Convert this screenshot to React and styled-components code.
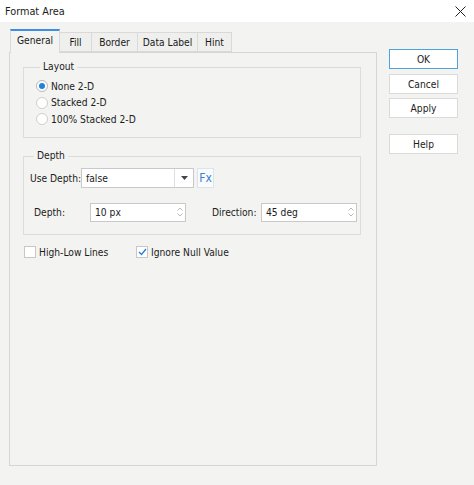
import styled, { createGlobalStyle } from "styled-components"

const GlobalStyle = createGlobalStyle`
  html, body {
    margin: 0;
    padding: 0;
    background: #f3f4f1;
  }
  * {
    box-sizing: border-box;
  }
`

const Dialog = styled.div`
  width: 474px;
  height: 485px;
  background: #f3f4f1;
  font-family: "DejaVu Sans Condensed", "Liberation Sans", sans-serif;
  font-size: 10.2px;
  color: #1b1b1b;
  display: flex;
  flex-direction: column;
  overflow: hidden;
  white-space: nowrap;
`

const TitleBar = styled.div`
  height: 22px;
  background: #ffffff;
  display: flex;
  align-items: center;
  justify-content: space-between;
  padding: 0 8px 0 5px;
  font-size: 10.8px;
`

const Body = styled.div`
  display: flex;
  padding: 7px 0 0 9px;
  gap: 12px;
`

const LeftColumn = styled.div`
  width: 368px;
  display: flex;
  flex-direction: column;
`

const TabStrip = styled.div`
  display: flex;
  align-items: flex-end;
  height: 23px;
  margin-left: 1px;
  position: relative;
  z-index: 1;
`

const Tab = styled.div`
  height: ${p => (p.$active ? "24px" : "20px")};
  width: ${p => p.$w}px;
  display: flex;
  align-items: center;
  justify-content: center;
  padding-bottom: ${p => (p.$active ? "3px" : "0")};
  background: ${p => (p.$active ? "#f3f4f1" : "#efefed")};
  border: 1px solid #d9d9d7;
  border-top: ${p => (p.$active ? "2px solid #3d8ee0" : "1px solid #d9d9d7")};
  border-bottom: ${p => (p.$active ? "none" : "1px solid #d9d9d7")};
  margin-right: -1px;
  margin-bottom: ${p => (p.$active ? "-1px" : "0")};
`

const Panel = styled.div`
  height: 414px;
  border: 1px solid #d6d6d4;
  padding: 7px 15px 0 13px;
  display: flex;
  flex-direction: column;
`

const Group = styled.fieldset`
  margin: 0 0 ${p => p.$mb}px;
  padding: ${p => p.$pad};
  border: 1px solid #dcdcda;
  min-width: 0;
  height: ${p => p.$h}px;
`

const Legend = styled.legend`
  padding: 0 3px;
  margin-left: 4px;
  line-height: 14px;
`

const RadioRow = styled.label`
  display: flex;
  align-items: center;
  height: 16.5px;
  gap: 3px;
`

const RadioDot = styled.span`
  width: 12px;
  height: 12px;
  border-radius: 50%;
  border: 1px solid ${p => (p.$on ? "#b8b8b8" : "#cfcfcf")};
  background: #ffffff;
  display: flex;
  align-items: center;
  justify-content: center;

  &::after {
    content: "";
    width: 6px;
    height: 6px;
    border-radius: 50%;
    background: ${p => (p.$on ? "#1f83dc" : "transparent")};
  }
`

const FieldRow = styled.div`
  display: flex;
  align-items: center;
  height: 20px;
  margin-top: ${p => p.$mt}px;
  padding-left: ${p => p.$pl || 0}px;
`

const FieldLabel = styled.span`
  width: ${p => p.$w}px;
  margin-left: ${p => p.$ml || 0}px;
  flex-shrink: 0;
`

const Combo = styled.div`
  width: 113px;
  height: 20px;
  background: #ffffff;
  border: 1px solid #c9c9c9;
  display: flex;
  align-items: center;
  padding-left: 4px;
`

const ComboText = styled.span`
  flex: 1;
`

const ComboArrow = styled.span`
  width: 19px;
  height: 100%;
  border-left: 1px solid #dedede;
  display: flex;
  align-items: center;
  justify-content: center;
`

const FxButton = styled.div`
  width: 17px;
  height: 20px;
  margin-left: 3px;
  border: 1px solid #dce3ec;
  background: #fafbfc;
  color: #3b7fd4;
  font-size: 12px;
  display: flex;
  align-items: center;
  justify-content: center;
`

const Spinner = styled.div`
  width: 96px;
  height: 19px;
  background: #ffffff;
  border: 1px solid #c9c9c9;
  display: flex;
  align-items: center;
  padding-left: 4px;
`

const SpinArrows = styled.span`
  width: 10px;
  display: flex;
  flex-direction: column;
  align-items: center;
  gap: 2px;
`

const CheckRow = styled.div`
  display: flex;
  align-items: center;
  margin-top: 11px;
  padding-left: 1px;
`

const CheckItem = styled.label`
  display: flex;
  align-items: center;
  gap: 3px;
  width: ${p => p.$w}px;
`

const CheckBox = styled.span`
  width: 12px;
  height: 12px;
  border: 1px solid #c7c7c7;
  background: #ffffff;
  display: flex;
  align-items: center;
  justify-content: center;
`

const ButtonColumn = styled.div`
  display: flex;
  flex-direction: column;
  padding-top: 20px;
  width: 69px;
`

const Button = styled.div`
  height: 20px;
  margin-top: ${p => p.$mt}px;
  background: #ffffff;
  border: 1px solid ${p => (p.$primary ? "#4fa3dc" : "#dadada")};
  display: flex;
  align-items: center;
  justify-content: center;
`

const UpDown = () => (
  <SpinArrows>
    <svg width="6" height="4" viewBox="0 0 6 4">
      <path d="M0.5 3.5 L3 1 L5.5 3.5" fill="none" stroke="#b9b9b9" strokeWidth="1" />
    </svg>
    <svg width="6" height="4" viewBox="0 0 6 4">
      <path d="M0.5 0.5 L3 3 L5.5 0.5" fill="none" stroke="#b9b9b9" strokeWidth="1" />
    </svg>
  </SpinArrows>
)

const tabs = [
  { name: "General", w: 50 },
  { name: "Fill", w: 33 },
  { name: "Border", w: 47 },
  { name: "Data Label", w: 61 },
  { name: "Hint", w: 35 },
]

const layouts = ["None 2-D", "Stacked 2-D", "100% Stacked 2-D"]

export default function App() {
  return (
    <>
      <GlobalStyle />
      <Dialog>
        <TitleBar>
          <span>Format Area</span>
          <svg width="11" height="11" viewBox="0 0 11 11">
            <path d="M0.5 0.5 L10.5 10.5 M10.5 0.5 L0.5 10.5" stroke="#222" strokeWidth="1" />
          </svg>
        </TitleBar>
        <Body>
          <LeftColumn>
            <TabStrip>
              {tabs.map((t, i) => (
                <Tab key={t.name} $w={t.w} $active={i === 0}>{t.name}</Tab>
              ))}
            </TabStrip>
            <Panel>
              <Group $h={78} $mb={11} $pad="4px 0 0 12px">
                <Legend>Layout</Legend>
                {layouts.map((l, i) => (
                  <RadioRow key={l}>
                    <RadioDot $on={i === 0} />
                    {l}
                  </RadioRow>
                ))}
              </Group>
              <Group $h={86} $mb={0} $pad="5px 0 0 6px">
                <Legend>Depth</Legend>
                <FieldRow $mt={0}>
                  <FieldLabel $w={51}>Use Depth:</FieldLabel>
                  <Combo>
                    <ComboText>false</ComboText>
                    <ComboArrow>
                      <svg width="7" height="4" viewBox="0 0 7 4">
                        <path d="M0 0 L7 0 L3.5 4 Z" fill="#444" />
                      </svg>
                    </ComboArrow>
                  </Combo>
                  <FxButton>Fx</FxButton>
                </FieldRow>
                <FieldRow $mt={14} $pl={4}>
                  <FieldLabel $w={56}>Depth:</FieldLabel>
                  <Spinner>
                    <ComboText>10 px</ComboText>
                    <UpDown />
                  </Spinner>
                  <FieldLabel $w={49} $ml={26}>Direction:</FieldLabel>
                  <Spinner>
                    <ComboText>45 deg</ComboText>
                    <UpDown />
                  </Spinner>
                </FieldRow>
              </Group>
              <CheckRow>
                <CheckItem $w={112}>
                  <CheckBox />
                  High-Low Lines
                </CheckItem>
                <CheckItem $w={150}>
                  <CheckBox>
                    <svg width="9" height="8" viewBox="0 0 9 8">
                      <path d="M1 4 L3.5 6.5 L8 1" fill="none" stroke="#2a7fd4" strokeWidth="1.4" />
                    </svg>
                  </CheckBox>
                  Ignore Null Value
                </CheckItem>
              </CheckRow>
            </Panel>
          </LeftColumn>
          <ButtonColumn>
            <Button $primary $mt={0}>OK</Button>
            <Button $mt={5}>Cancel</Button>
            <Button $mt={4}>Apply</Button>
            <Button $mt={16}>Help</Button>
          </ButtonColumn>
        </Body>
      </Dialog>
    </>
  )
}
